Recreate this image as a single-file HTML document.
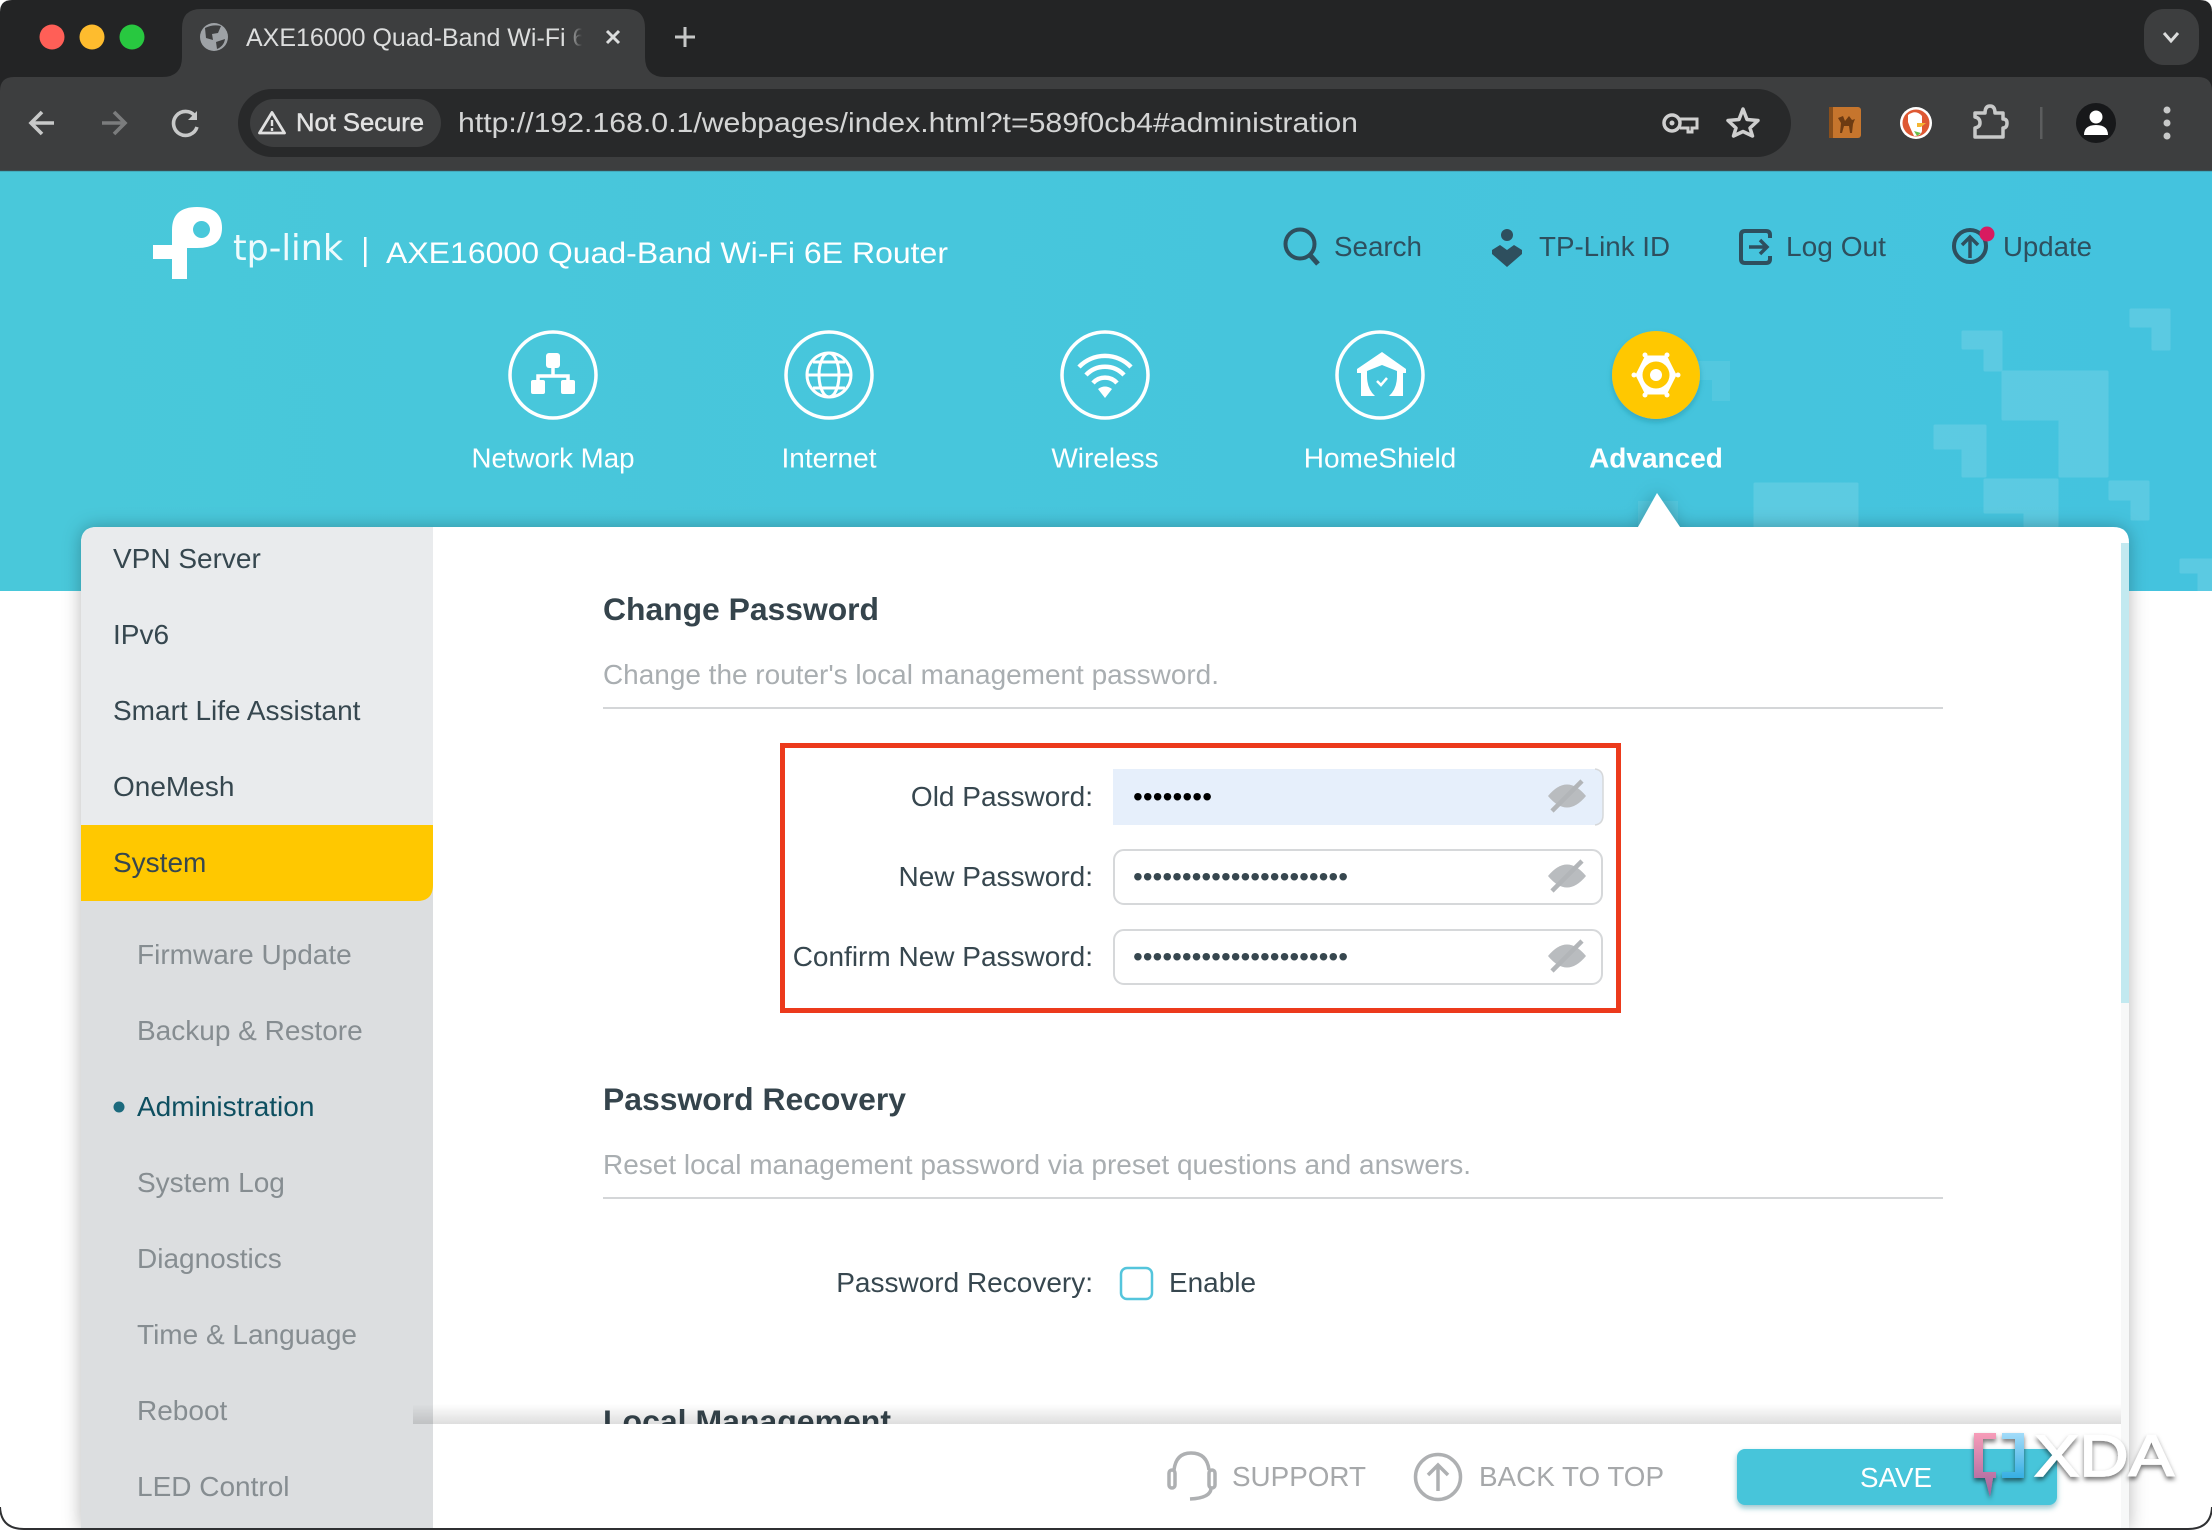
<!DOCTYPE html>
<html lang="en">
<head>
<meta charset="utf-8">
<title>AXE16000 Quad-Band Wi-Fi 6E Router</title>
<style>
html,body{margin:0;padding:0;background:#fff;width:2212px;height:1530px;overflow:hidden}
svg{display:block}
text{font-family:"Liberation Sans",Arial,sans-serif;font-size:28px}
.s{fill:#36474f}
.u{fill:#868d91}
.d{fill:#a9aeb1}
.t{font-weight:bold;font-size:31.7px;fill:#35444c}
.l{fill:#37474f;text-anchor:end}
.h{fill:#2e4f5e}
.n{fill:#fff;text-anchor:middle}
.f{fill:#a6a8aa}
</style>
</head>
<body>
<svg width="2212" height="1530" viewBox="0 0 2212 1530" xmlns="http://www.w3.org/2000/svg">
<defs>
<clipPath id="tabclip"><rect x="240" y="14" width="342" height="50"/></clipPath>
<linearGradient id="teal" x1="0" y1="0" x2="1" y2="0"><stop offset="0" stop-color="#49c8da"/><stop offset="1" stop-color="#44c3de"/></linearGradient>
<linearGradient id="fade" x1="0" y1="0" x2="1" y2="0"><stop offset="0" stop-color="#3d3e3f" stop-opacity="0"/><stop offset="1" stop-color="#3d3e3f"/></linearGradient>
<linearGradient id="fs" x1="0" y1="0" x2="0" y2="1"><stop offset="0" stop-color="#000" stop-opacity="0"/><stop offset="1" stop-color="#000" stop-opacity=".13"/></linearGradient>
<linearGradient id="pink" x1="0" y1="0" x2="0" y2="1"><stop offset="0" stop-color="#f79cb8"/><stop offset="1" stop-color="#a0619c"/></linearGradient>
<linearGradient id="blue" x1="0" y1="0" x2="0" y2="1"><stop offset="0" stop-color="#a3dbf9"/><stop offset="1" stop-color="#36aee2"/></linearGradient>
<filter id="cs" x="-5%" y="-5%" width="110%" height="110%"><feDropShadow dx="0" dy="0" stdDeviation="9" flood-color="#000" flood-opacity=".28"/></filter>
<filter id="bs" x="-10%" y="-30%" width="120%" height="170%"><feDropShadow dx="0" dy="3" stdDeviation="3" flood-color="#1d7c8e" flood-opacity=".45"/></filter>
<filter id="ys" x="-30%" y="-30%" width="160%" height="160%"><feDropShadow dx="0" dy="3" stdDeviation="3" flood-color="#1c7a8a" flood-opacity=".4"/></filter>
<filter id="xs" x="-10%" y="-20%" width="120%" height="150%"><feDropShadow dx="0" dy="3" stdDeviation="2.500" flood-color="#000" flood-opacity=".55"/></filter>
<g id="eye">
<path d="M-18 0Q1-23 20 0Q1 23-18 0Z" fill="#b9bcbf"/>
<path d="M-14 15L16-15" stroke="#b2b5b8" stroke-width="4.500" fill="none"/>
</g>
</defs>

<!-- window chrome -->
<path d="M0 12Q0 0 12 0H2200Q2212 0 2212 12V172H0Z" fill="#232425"/>
<path d="M0 91Q0 77 14 77H2198Q2212 77 2212 91V172H0Z" fill="#3d3e3f"/>
<path d="M162 77Q182 77 182 57V28Q182 9 201 9H626Q645 9 645 28V57Q645 77 665 77Z" fill="#3d3e3f"/>
<circle cx="52" cy="37" r="12.500" fill="#ff5f57"/>
<circle cx="92" cy="37" r="12.500" fill="#febc2e"/>
<circle cx="132" cy="37" r="12.500" fill="#28c840"/>
<circle cx="214" cy="37" r="14" fill="#9ea2a6"/>
<path d="M205 28Q213 24 221 26L218 33L212 34L213 40L206 38ZM216 42L225 39Q224 46 217 49Z" fill="#3d3e3f"/>
<text x="246" y="46" clip-path="url(#tabclip)" style="font-size:25px" fill="#dcdddd">AXE16000 Quad-Band Wi-Fi 6E Router</text>
<rect x="566" y="18" width="16" height="40" fill="url(#fade)"/>
<path d="M607 31L619 43M619 31L607 43" stroke="#dcdddd" stroke-width="3" fill="none"/>
<path d="M685 27V47M675 37H695" stroke="#c6c7c7" stroke-width="3" fill="none"/>
<rect x="2144" y="9" width="55" height="56" rx="20" fill="#3d3e3f"/>
<path d="M2164 33L2171 41L2178 33" stroke="#dcdddd" stroke-width="3" fill="none"/>

<!-- toolbar -->
<path d="M54 123H32M42 112L31 123L42 134" stroke="#c8c9c9" stroke-width="3.600" fill="none"/>
<path d="M102 123H124M114 112L125 123L114 134" stroke="#7b7c7d" stroke-width="3.600" fill="none"/>
<path d="M195 116A12 12 0 1 0 197 127" stroke="#c8c9c9" stroke-width="3.600" fill="none"/>
<path d="M197 111V120H188Z" fill="#c8c9c9"/>
<rect x="238" y="89" width="1553" height="68" rx="34" fill="#28292a"/>
<rect x="250" y="99" width="191" height="48" rx="24" fill="#3d3e3f"/>
<path d="M272 112.500L284.500 133H259.500Z" stroke="#e0e0e0" stroke-width="2.800" fill="none" stroke-linejoin="round"/>
<path d="M272 120V126M272 128V131" stroke="#e0e0e0" stroke-width="2.400"/>
<text x="296" y="131" textLength="128" lengthAdjust="spacingAndGlyphs" style="font-size:25px" fill="#e2e2e2" stroke="#e2e2e2" stroke-width=".5">Not Secure</text>
<text x="458" y="132" textLength="900" lengthAdjust="spacingAndGlyphs" fill="#d4d5d5">http://192.168.0.1/webpages/index.html?t=589f0cb4#administration</text>
<circle cx="1672" cy="123" r="8" stroke="#cfcfcf" stroke-width="3.500" fill="none"/>
<circle cx="1672" cy="123" r="2.500" fill="#cfcfcf"/>
<path d="M1680 119H1697V128H1692V132H1688V128H1680" stroke="#cfcfcf" stroke-width="3" fill="none"/>
<path d="M1743 109L1747 119.500L1758 120.500L1750 128L1752.500 136L1743 131.500L1733.500 136L1736 128L1728 120.500L1739 119.500Z" stroke="#cfcfcf" stroke-width="3.500" fill="none" stroke-linejoin="round"/>
<rect x="1829" y="107" width="32" height="31" rx="3" fill="#c6752d"/>
<rect x="1829" y="107" width="4" height="31" fill="#8a4f1b"/>
<path d="M1838 118L1843 116L1845 121L1849 116L1852 120L1855 119L1853 124L1852 133H1850L1849 126H1844L1842 133H1840L1841 123Z" fill="#6d3b12"/>
<circle cx="1916" cy="123" r="16" fill="#fff"/>
<circle cx="1916" cy="123" r="13.500" fill="#de5833"/>
<path d="M1908 115Q1916 109 1922 116L1922 131Q1921 136 1914 136Q1910 128 1908 122Z" fill="#fff"/>
<path d="M1917 123H1926L1921 127H1917Z" fill="#f5b533"/>
<path d="M1914 131L1921 133L1917 136Z" fill="#67bd49"/>
<path d="M1975 113H1985Q1985 106 1990 106Q1995 106 1995 113H2003V119Q2007 119 2007 123Q2007 128 2003 128V137H1975V128Q1980 127 1980 123Q1980 118 1975 117Z" stroke="#c8c9c9" stroke-width="3.500" fill="none" stroke-linejoin="round"/>
<rect x="2040" y="107" width="2.500" height="32" fill="#5c5d5e"/>
<ellipse cx="2096" cy="123" rx="20" ry="20" fill="#17181a"/>
<circle cx="2096" cy="117" r="6.500" fill="#fff"/>
<path d="M2084 135Q2084 125 2096 125Q2108 125 2108 135Z" fill="#fff"/>
<circle cx="2167" cy="110" r="3.500" fill="#c8c9c9"/>
<circle cx="2167" cy="123" r="3.500" fill="#c8c9c9"/>
<circle cx="2167" cy="136" r="3.500" fill="#c8c9c9"/>

<!-- teal header -->
<rect x="0" y="171" width="2212" height="420" fill="url(#teal)"/>
<rect x="0" y="170" width="2212" height="1.500" fill="#355d67" opacity=".5"/>
<g fill="#fff" stroke="#fff" stroke-width="3" stroke-linejoin="round" opacity=".12">
<path d="M1963 332H2001V370H1985V348H1963Z"/>
<path d="M2131 310H2169V349H2153V326H2131Z"/>
<path d="M2003 372H2107V476H2060V419H2003Z"/>
<path d="M1935 426H1985V476H1963V448H1935Z"/>
<path d="M1985 480H2057V526H2025V512H1985Z"/>
<path d="M2110 482H2148V519H2132V499H2110Z"/>
<path d="M2181 560H2212V591H2199V572H2181Z"/>
<rect x="1755" y="484" width="102" height="43"/>
</g>
<g fill="#fff" fill-opacity=".08">
<path d="M1690 361H1730V401H1712V380H1690Z"/>
<rect x="1638" y="501" width="40" height="26"/>
</g>

<!-- logo -->
<path fill-rule="evenodd" d="M172 258V230Q172 207 197 207Q222 207 222 228Q222 248 197 248H187V258ZM201.500 221A8.500 8.500 0 1 0 201.500 238A8.500 8.500 0 1 0 201.500 221Z" fill="#fff"/>
<rect x="153" y="245" width="30" height="14" fill="#fff"/>
<rect x="172" y="251" width="15" height="28" fill="#fff"/>
<text x="233" y="260" textLength="110" lengthAdjust="spacingAndGlyphs" style="font-family:'DejaVu Sans',sans-serif;font-size:36px" fill="#eefbfd">tp-link</text>
<rect x="364" y="237" width="2.500" height="30" fill="#fff"/>
<text x="386" y="263" textLength="562" lengthAdjust="spacingAndGlyphs" style="font-size:30px" fill="#fff">AXE16000 Quad-Band Wi-Fi 6E Router</text>

<!-- top right actions -->
<circle cx="1300" cy="244" r="14.500" stroke="#2e4f5e" stroke-width="4" fill="none"/>
<path d="M1310 255L1318 264" stroke="#2e4f5e" stroke-width="5"/>
<text class="h" x="1334" y="256" textLength="88" lengthAdjust="spacingAndGlyphs">Search</text>
<circle cx="1507" cy="235" r="6" fill="#2e4f5e"/>
<path d="M1492 250L1500 245L1507 250L1514 245L1522 250V254L1507 267L1492 254Z" fill="#2e4f5e"/>
<text class="h" x="1539" y="256" textLength="131" lengthAdjust="spacingAndGlyphs">TP-Link ID</text>
<path d="M1770 238V235Q1770 231 1766 231H1745Q1741 231 1741 235V259Q1741 263 1745 263H1766Q1770 263 1770 259V256" stroke="#2e4f5e" stroke-width="4" fill="none"/>
<path d="M1749 247H1767M1760 240L1767 247L1760 254" stroke="#2e4f5e" stroke-width="3.500" fill="none"/>
<text class="h" x="1786" y="256" textLength="100" lengthAdjust="spacingAndGlyphs">Log Out</text>
<circle cx="1970" cy="246" r="16" stroke="#2e4f5e" stroke-width="4" fill="none"/>
<path d="M1970 258V237M1962 245L1970 237L1978 245" stroke="#2e4f5e" stroke-width="3.500" fill="none"/>
<circle cx="1987" cy="234" r="7.500" fill="#d81b60"/>
<text class="h" x="2003" y="256" textLength="89" lengthAdjust="spacingAndGlyphs">Update</text>

<!-- main nav -->
<g fill="none" stroke="#fff" stroke-width="3.500">
<circle cx="553" cy="375" r="43"/>
<circle cx="829" cy="375" r="43"/>
<circle cx="1105" cy="375" r="43"/>
<circle cx="1380" cy="375" r="43"/>
</g>
<g fill="#fff">
<rect x="546" y="353" width="14" height="15" rx="3"/>
<rect x="531" y="380" width="14" height="14" rx="2"/>
<rect x="561" y="380" width="14" height="14" rx="2"/>
</g>
<path d="M553 367V376M538 382V376H568V382" stroke="#fff" stroke-width="3.500" fill="none"/>
<g fill="none" stroke="#fff" stroke-width="3">
<circle cx="829" cy="375" r="22"/>
<ellipse cx="829" cy="375" rx="10" ry="22"/>
<path d="M807 375H851M813 362H845M813 388H845"/>
</g>
<g fill="none" stroke="#fff" stroke-width="4.500">
<path d="M1079 367A36 36 0 0 1 1131 367"/>
<path d="M1086 375A26 26 0 0 1 1124 375"/>
<path d="M1093 383A16 16 0 0 1 1117 383"/>
</g>
<path d="M1098 389Q1105 384 1112 389L1105 398Z" fill="#fff"/>
<path d="M1382 352L1406 369V373H1403V396H1389Q1397 389 1397 376V371L1382 365L1367 371V376Q1367 389 1375 396H1361V373H1357V369Z" fill="#fff"/>
<path d="M1377 381L1381 385L1387 378" stroke="#fff" stroke-width="2.500" fill="none"/>
<circle cx="1656" cy="375" r="44" fill="#ffc800" filter="url(#ys)"/>
<path d="M1676 375L1666.500 356H1645.500L1636 375L1645.500 394H1666.500Z" fill="#fff" stroke="#fff" stroke-width="1" stroke-linejoin="round"/>
<circle cx="1656" cy="375" r="13.500" fill="#ffc800"/>
<circle cx="1656" cy="375" r="6" fill="#fff"/>
<g fill="#fff"><circle cx="1678" cy="375" r="2.500"/><circle cx="1634" cy="375" r="2.500"/><circle cx="1667" cy="355" r="2.500"/><circle cx="1645" cy="355" r="2.500"/><circle cx="1667" cy="395" r="2.500"/><circle cx="1645" cy="395" r="2.500"/></g>
<text class="n" x="553" y="467.500" textLength="163" lengthAdjust="spacingAndGlyphs">Network Map</text>
<text class="n" x="829" y="467.500">Internet</text>
<text class="n" x="1105" y="467.500">Wireless</text>
<text class="n" x="1380" y="467.500">HomeShield</text>
<text class="n" x="1656" y="467.500" style="font-weight:bold">Advanced</text>

<!-- card -->
<g filter="url(#cs)">
<path d="M81 1530V543Q81 527 97 527H1638L1657 493L1680 527H2113Q2129 527 2129 543V1530Z" fill="#fff"/>
</g>
<path d="M81 1530V543Q81 527 97 527H433V1530Z" fill="#e9ebed"/>
<rect x="81" y="885" width="352" height="645" fill="#dcdee0"/>
<path d="M81 825H433V885Q433 901 417 901H81Z" fill="#ffc800"/>
<rect x="2121" y="543" width="8" height="460" fill="#c2e9f0"/>
<rect x="2121" y="1003" width="8" height="527" fill="#f7f8f8"/>

<!-- sidebar -->
<text class="s" x="113" y="568">VPN Server</text>
<text class="s" x="113" y="644">IPv6</text>
<text class="s" x="113" y="720">Smart Life Assistant</text>
<text class="s" x="113" y="796">OneMesh</text>
<text class="s" x="113" y="872">System</text>
<text class="u" x="137" y="964">Firmware Update</text>
<text class="u" x="137" y="1040">Backup &amp; Restore</text>
<circle cx="119" cy="1107" r="5.500" fill="#1c6a7d"/>
<text x="137" y="1116" fill="#0e4f60">Administration</text>
<text class="u" x="137" y="1192">System Log</text>
<text class="u" x="137" y="1268">Diagnostics</text>
<text class="u" x="137" y="1344">Time &amp; Language</text>
<text class="u" x="137" y="1420">Reboot</text>
<text class="u" x="137" y="1496">LED Control</text>

<!-- change password -->
<text class="t" x="603" y="620" textLength="276" lengthAdjust="spacingAndGlyphs">Change Password</text>
<text class="d" x="603" y="684" textLength="616" lengthAdjust="spacingAndGlyphs">Change the router's local management password.</text>
<rect x="603" y="707" width="1340" height="2" fill="#d4d6d8"/>

<rect x="782.500" y="745.500" width="836" height="265" fill="none" stroke="#ec3a1c" stroke-width="5"/>
<text class="l" x="1093" y="806">Old Password:</text>
<text class="l" x="1093" y="886">New Password:</text>
<text class="l" x="1093" y="966">Confirm New Password:</text>

<path d="M1113 769H1593Q1603 769 1603 779V815Q1603 825 1593 825H1113Z" fill="#e6effb"/>
<path d="M1595 769Q1603 770 1603 779V815Q1603 824 1595 825" fill="none" stroke="#d6d8da" stroke-width="1.500"/>
<rect x="1114" y="850" width="488" height="54" rx="10" fill="#fff" stroke="#d6d8da" stroke-width="2"/>
<rect x="1114" y="930" width="488" height="54" rx="10" fill="#fff" stroke="#d6d8da" stroke-width="2"/>
<text x="1133" y="806" textLength="79" lengthAdjust="spacing" fill="#000">••••••••</text>
<text x="1133" y="886" textLength="215" lengthAdjust="spacing" fill="#37474f">••••••••••••••••••••••</text>
<text x="1133" y="966" textLength="215" lengthAdjust="spacing" fill="#37474f">••••••••••••••••••••••</text>
<use href="#eye" x="1566" y="796"/>
<use href="#eye" x="1566" y="876"/>
<use href="#eye" x="1566" y="956"/>

<!-- password recovery -->
<text class="t" x="603" y="1110" textLength="303" lengthAdjust="spacingAndGlyphs">Password Recovery</text>
<text class="d" x="603" y="1174" textLength="868" lengthAdjust="spacingAndGlyphs">Reset local management password via preset questions and answers.</text>
<rect x="603" y="1197" width="1340" height="2" fill="#d4d6d8"/>
<text class="l" x="1093" y="1292">Password Recovery:</text>
<rect x="1121" y="1268" width="31" height="31" rx="6" fill="#fff" stroke="#54c5dc" stroke-width="2.500"/>
<text x="1169" y="1292" textLength="87" lengthAdjust="spacingAndGlyphs" fill="#37474f">Enable</text>

<text class="t" x="603" y="1432" textLength="288" lengthAdjust="spacingAndGlyphs">Local Management</text>

<!-- footer -->
<rect x="433" y="1424" width="1688" height="106" fill="#fff"/>
<rect x="413" y="1404" width="1708" height="20" fill="url(#fs)"/>
<g fill="none" stroke="#aeb0b2" stroke-width="3.500">
<path d="M1174 1470Q1176 1453 1191 1453Q1207 1453 1209 1470"/>
<rect x="1169" y="1470" width="6" height="18" rx="3"/>
<rect x="1209" y="1470" width="6" height="18" rx="3"/>
<path d="M1211 1488Q1211 1498 1190 1499"/>
<ellipse cx="1438" cy="1477" rx="22.500" ry="22.500"/>
<path d="M1438 1491V1465M1428 1475L1438 1465L1448 1475"/>
</g>
<text class="f" x="1232" y="1486" textLength="134" lengthAdjust="spacingAndGlyphs">SUPPORT</text>
<text class="f" x="1479" y="1486" textLength="185" lengthAdjust="spacingAndGlyphs">BACK TO TOP</text>
<rect x="1737" y="1449" width="320" height="56" rx="8" fill="#47c5da" filter="url(#bs)"/>
<text x="1896" y="1487" text-anchor="middle" fill="#fff" textLength="72" lengthAdjust="spacingAndGlyphs">SAVE</text>

<!-- XDA mark -->
<g filter="url(#xs)">
<path d="M1974 1433H1996V1439H1983V1472H1996V1478H1993L1990 1497L1985 1478H1974Z" fill="url(#pink)"/>
<path d="M2002 1433H2024V1478H2002V1472H2015V1439H2002Z" fill="url(#blue)"/>
<text x="2034" y="1476" textLength="140" lengthAdjust="spacingAndGlyphs" style="font-size:58px" fill="#fff" stroke="#fff" stroke-width="1.500">XDA</text>
</g>

<!-- window bottom edge -->
<path d="M0 1507Q1 1529 24 1529H2188Q2211 1529 2212 1507V1530H0Z" fill="#fff"/>
<path d="M0 1507Q1 1529 24 1529H2188Q2211 1529 2212 1507" fill="none" stroke="#2f3032" stroke-width="2"/>
</svg>
</body>
</html>
